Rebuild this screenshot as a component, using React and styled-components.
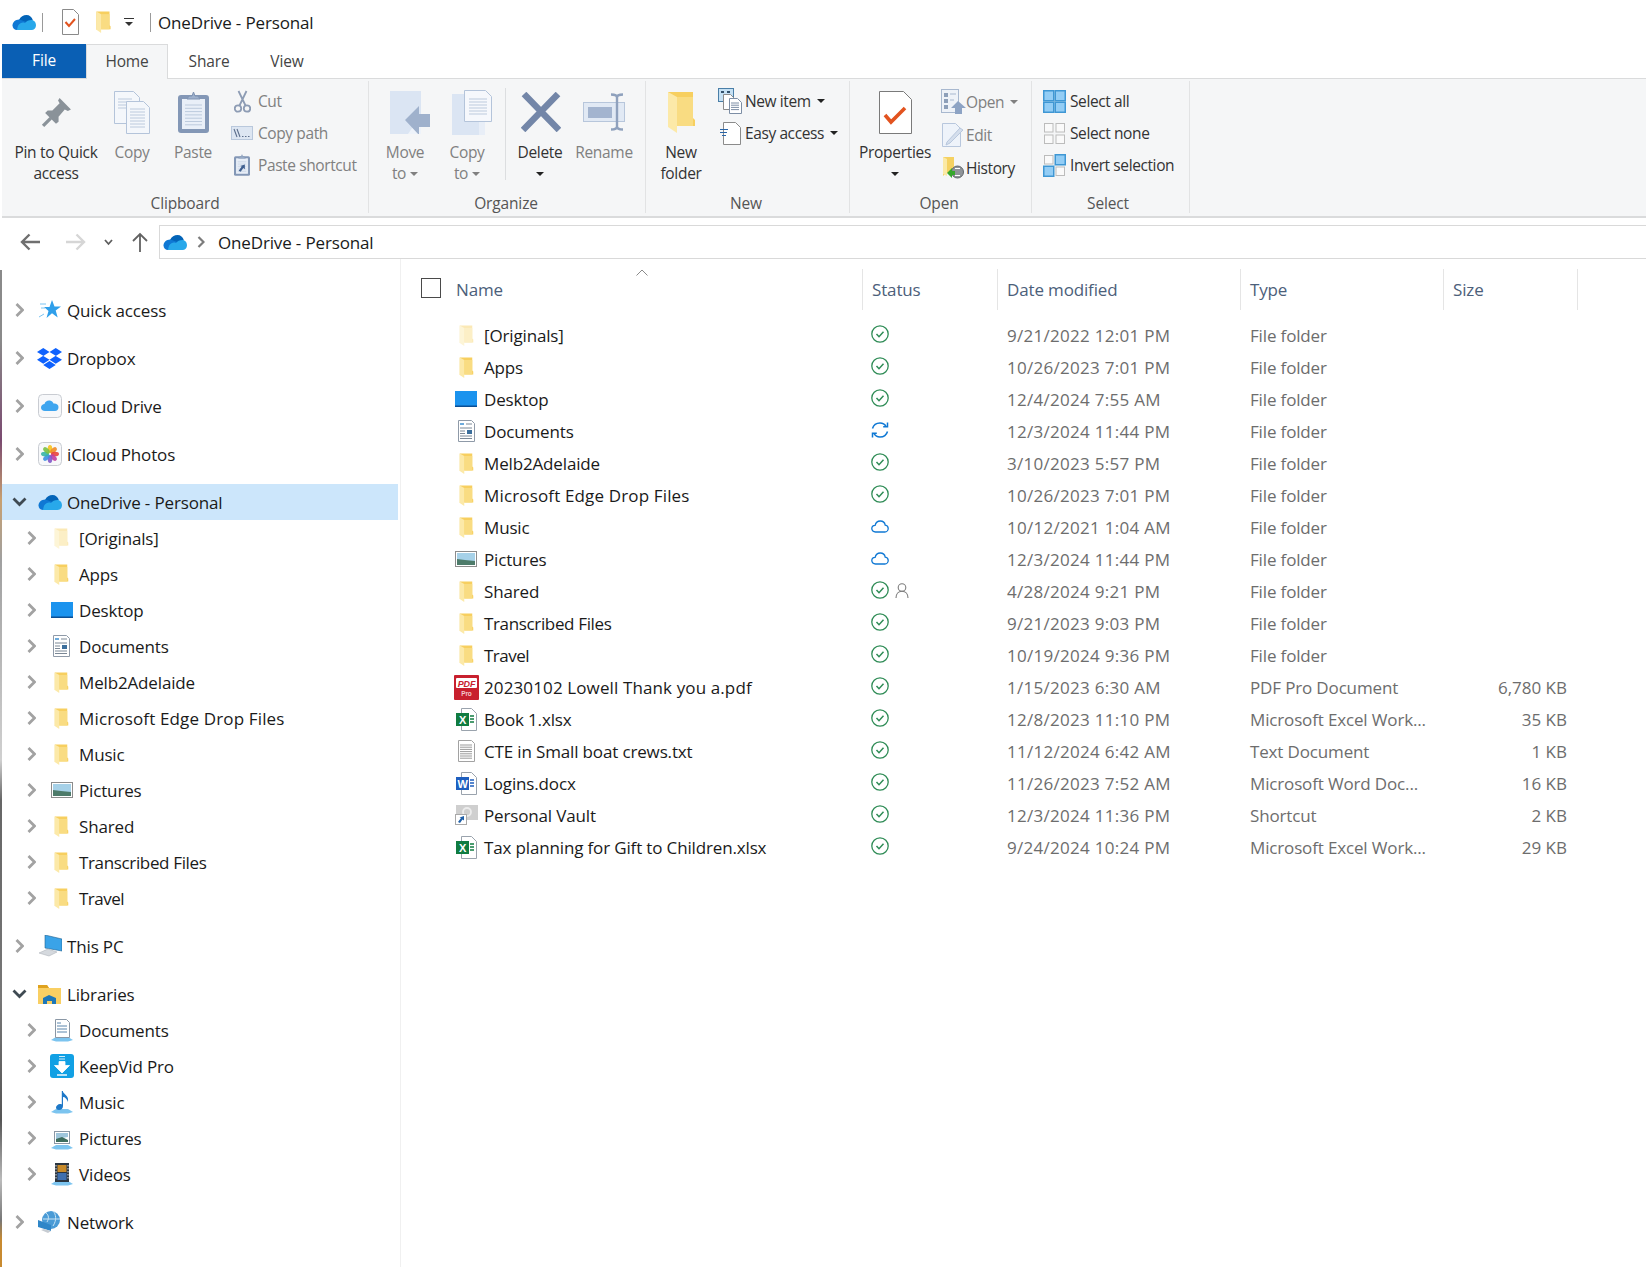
import React from 'react';
import styled, { createGlobalStyle } from 'styled-components';
import { FaDropbox } from 'react-icons/fa';

const GlobalStyle = createGlobalStyle`
  html, body { margin: 0; padding: 0; background: #fff; }
  body { font-family: "Open Sans", "Noto Sans", "Liberation Sans", sans-serif; letter-spacing: -0.15px; }
`;

/* ---------- shared drawings ---------- */

const Cloud = ({ w = 24, h = 15 }) => (
  <svg width={w} height={h} viewBox="0 0 24 15">
    <path d="M7 5C8.5 1.8 11.5 0 14.5 0c3 0 5.5 2 6.3 5L14 11 6 7z" fill="#0364b8" />
    <path d="M7.5 4.5C3.5 4.3.5 7.3.5 10.5.5 13 2.5 15 5 15h9l3-7z" fill="#0f78d4" />
    <path d="M19.5 5c-3 0-5 1.2-6.5 3-1.5-.6-3-.6-4.5.2-2 1-3 3-3.5 6.8h14.5c2.5 0 4.5-2 4.5-4.8S22 5 19.5 5z" fill="#28a8ea" />
  </svg>
);

const Folder = ({ w = 15, h = 21, faded }) => (
  <svg width={w} height={h} viewBox="0 0 27 42" opacity={faded ? 0.45 : 1}>
    <path d="M0 1h25v26l2 2v6H9L0 36z" fill="#f7cf5f" />
    <path d="M9 6h16v29H9z" fill="#f9dc82" />
    <path d="M0 1l9 5v36l-9-6z" fill="#fce9a8" />
  </svg>
);

const DocLines = ({ x, y, w, n, gap = 3, color = '#bccadd' }) => (
  <>
    {Array.from({ length: n }).map((_, i) => (
      <line key={i} x1={x} x2={x + w} y1={y + i * gap} y2={y + i * gap} stroke={color} strokeWidth="1" />
    ))}
  </>
);

const Page = ({ x, y, w, h, fold = 6, fill = '#f4f7fb', stroke = '#b4c4da' }) => (
  <path
    d={`M${x + .5} ${y + .5}h${w - fold}l${fold} ${fold}v${h - fold}h${-w}z`}
    fill={fill}
    stroke={stroke}
  />
);

const Clipboard = ({ w, h, arrow }) => (
  <svg width={w} height={h} viewBox="0 0 31 42">
    <rect y="4" width="31" height="38" rx="3" fill="#8397b6" />
    <rect x="4" y="8" width="23" height="30" fill="#e9eff8" />
    <DocLines x={7} y={14} w={17} n={7} gap={3.3} />
    <path d="M9 8l2-3h3l1.5-4 1.5 4h3l2 3z" fill="#9db0cc" stroke="#7f93b2" />
    {arrow && <path d="M9 32l6-8-3-1 9-3v9l-3-2-5 7z" fill="#3f5f8f" />}
  </svg>
);

const Pin = () => (
  <svg width="31" height="31" viewBox="0 0 30 30">
    <path d="M18 1l11 11-3 1.5-3-1.5-6 7v5l-2.5 2L4 15.5 6.5 13H11l7-7-1.5-2.5z" fill="#8a9299" />
    <path d="M9.5 20.5L2 28" stroke="#8a9299" strokeWidth="3.2" />
  </svg>
);

const CopyDocs = () => (
  <svg width="36" height="43" viewBox="0 0 36 43">
    <Page x={0} y={0} w={25} h={32} />
    <DocLines x={4} y={8} w={14} n={4} />
    <Page x={12} y={10} w={23} h={32} />
    <DocLines x={16} y={18} w={15} n={7} />
  </svg>
);

const Scissors = () => (
  <svg width="17" height="23" viewBox="0 0 17 23" fill="none" stroke="#8d9cb4" strokeWidth="1.8">
    <circle cx="4" cy="18.5" r="3.2" />
    <circle cx="13" cy="18.5" r="3.2" />
    <path d="M5.5 15.5L12.5 1M11.5 15.5L4.5 1" />
  </svg>
);

const CopyPath = () => (
  <svg width="22" height="14" viewBox="0 0 22 14">
    <rect x=".5" y=".5" width="21" height="13" fill="#dde6f2" stroke="#b9c8dc" />
    <path d="M3 3l3 8M6 3l3 8" stroke="#5d6f8c" strokeWidth="1.1" />
    <path d="M11 10.5h1.5M14 10.5h1.5M17 10.5h1.5" stroke="#5d6f8c" strokeWidth="1.2" />
  </svg>
);

const MoveTo = () => (
  <svg width="40" height="43" viewBox="0 0 40 43">
    <path d="M0 0h31v43H0z" fill="#dbe5f3" />
    <path d="M31 24v19H18z" fill="#eef3fa" />
    <path d="M15 29l14-14v8h11v13H29v8z" fill="#9fb1cc" />
  </svg>
);

const CopyTo = () => (
  <svg width="40" height="45" viewBox="0 0 40 45">
    <path d="M0 4h27v41H0z" fill="#dbe5f3" />
    <path d="M27 4h6v41h-6z" fill="#e8eef7" />
    <Page x={12} y={0} w={27} h={31} fill="#f6f8fc" />
    <DocLines x={17} y={9} w={18} n={6} />
  </svg>
);

const DeleteX = () => (
  <svg width="40" height="40" viewBox="0 0 40 40">
    <path d="M3 2l35 36M37 2L2 38" stroke="#7386a8" strokeWidth="6.5" />
  </svg>
);

const RenameIcon = () => (
  <svg width="43" height="38" viewBox="0 0 43 38">
    <rect x=".5" y="9.5" width="41" height="19" fill="#e1e9f4" stroke="#b7c6db" />
    <rect x="5" y="14" width="24" height="11" fill="#a3b4cf" />
    <path d="M28 1.5c4 0 6 1 6 3v29c0 2-2 3-6 3M40 1.5c-4 0-6 1-6 3v29c0 2 2 3 6 3" fill="none" stroke="#8fa1bd" strokeWidth="2.4" />
  </svg>
);

const NewItem = () => (
  <svg width="24" height="26" viewBox="0 0 24 26">
    <rect x=".5" y=".5" width="15" height="13" fill="#c5e0f3" stroke="#4a7fa8" />
    <path d="M3 4h3M9 4h3" stroke="#33516c" strokeWidth="2" />
    <Page x={5} y={6} w={11} h={15} fill="#fff" stroke="#8b8b8b" fold={4} />
    <Page x={11} y={10} w={12} h={15} fill="#fff" stroke="#7d8ea5" fold={4} />
    <DocLines x={13} y={15} w={8} n={4} gap={2.2} color="#7d8ea5" />
  </svg>
);

const EasyAccess = () => (
  <svg width="21" height="23" viewBox="0 0 21 23">
    <Page x={3} y={0} w={17} h={22} fill="#fff" stroke="#8b8b8b" fold={5} />
    <path d="M0 7.5h8M0 10.5h7M2 13.5h4" stroke="#2a66a8" strokeWidth="1.2" />
  </svg>
);

const PropertiesIcon = () => (
  <svg width="33" height="43" viewBox="0 0 33 43">
    <Page x={0} y={0} w={32} h={42} fill="#fff" stroke="#7a7a7a" fold={8} />
    <path d="M6 24l6 7 14-14" fill="none" stroke="#e2531f" strokeWidth="3.6" />
  </svg>
);

const OpenIcon = () => (
  <svg width="25" height="25" viewBox="0 0 25 25">
    <rect x=".5" y=".5" width="17" height="23" fill="#eef2f8" stroke="#a8b8cf" />
    <path d="M3 4h4v4H3zM3 10h4v4H3zM3 16h4v4H3z" fill="#8d9fb9" />
    <path d="M9 5h6M9 11h4" stroke="#a8b8cf" />
    <path d="M17 12l8 7h-4v6h-7v-6h-4z" fill="#8da3c4" />
  </svg>
);

const EditIcon = () => (
  <svg width="22" height="24" viewBox="0 0 22 24">
    <Page x={0} y={0} w={18} h={23} fill="#eef3fa" stroke="#b8c7dd" fold={5} />
    <path d="M5 19L18 5l3 2L8 20l-4 2z" fill="#d4deec" stroke="#b8c7dd" />
  </svg>
);

const HistoryIcon = () => (
  <svg width="21" height="23" viewBox="0 0 21 23">
    <path d="M0 1h11v16H3l-3 3z" fill="#f5d161" />
    <path d="M0 1l4 2v17l-4-2z" fill="#fbe9a5" />
    <circle cx="14.5" cy="16" r="6" fill="#8f9499" stroke="#60656a" />
    <path d="M12 12.5h5M12 19.5h5" stroke="#fff" strokeWidth="1.2" />
    <path d="M4 17l5-5v3h3v4H9v3z" fill="#35a72c" />
  </svg>
);

const Grid4 = ({ on = [] }) => (
  <svg width="23" height="23" viewBox="0 0 23 23">
    {[[0, 0], [11.5, 0], [0, 11.5], [11.5, 11.5]].map(([x, y], i) => (
      on.includes(i)
        ? <rect key={i} x={x + .75} y={y + .75} width="10" height="10" fill="#93cdf5" stroke="#3f97d4" strokeWidth="1.5" />
        : <rect key={i} x={x + 1.5} y={y + 1.5} width="8.5" height="8.5" fill="#fafafa" stroke="#bcbcbc" />
    ))}
  </svg>
);

const StarIcon = () => (
  <svg width="22" height="20" viewBox="0 0 22 20">
    <path d="M13 0l2.5 6.5H22l-5.3 4 2 7-5.7-4.2L7.5 18l2-7-4.5-4h5.5z" fill="#2f9fea" />
    <path d="M1 4h6M2 8h4M0 17l5-3" stroke="#7bc4f2" strokeWidth="1" />
  </svg>
);

const AppTile = ({ children }) => (
  <svg width="24" height="24" viewBox="0 0 24 24">
    <rect x=".5" y=".5" width="23" height="23" rx="4" fill="#f7f8fa" stroke="#c9ccd2" />
    {children}
  </svg>
);

const IcloudDrive = () => (
  <AppTile>
    <path d="M7 17c-2.5 0-4-1.5-4-3.5S5 10 6.5 10c.5-2.500 3-4 5.500-3.500 1.500.3 3 1.500 3.500 3 2.500-.5 5 1 5 3.500S19 17 17 17z" fill="#3ea5ef" />
  </AppTile>
);

const petals = ['#f6c21c', '#f08a24', '#e8413c', '#c33c9c', '#7f58c9', '#3d8fe0', '#35b5a6', '#79c043'];
const IcloudPhotos = () => (
  <AppTile>
    {petals.map((c, i) => (
      <ellipse key={c} cx="12" cy="7" rx="2.3" ry="4" fill={c} opacity="0.9" transform={`rotate(${i * 45} 12 12)`} />
    ))}
  </AppTile>
);

const ThisPc = () => (
  <svg width="24" height="22" viewBox="0 0 24 22">
    <path d="M7 0l17 4v12L7 13z" fill="#3aa3e8" stroke="#24618f" strokeWidth=".6" />
    <path d="M1 18l9-4 9 3-8 4z" fill="#d5d9de" stroke="#aeb4ba" strokeWidth=".6" />
  </svg>
);

const LibrariesIcon = () => (
  <svg width="23" height="19" viewBox="0 0 23 19">
    <path d="M0 0h9l2 3h12v16H0z" fill="#f9cf63" />
    <path d="M0 0h9l2 3H0z" fill="#dfa21e" />
    <path d="M5 19v-6l6-3 7 3v6h-4v-3H9v3z" fill="#1e77b8" />
  </svg>
);

const Shelf = ({ children }) => (
  <svg width="24" height="24" viewBox="0 0 24 24">
    <path d="M1 22l5-3h12l5 3-5 1.5H6z" fill="#7cc4ef" />
    {children}
  </svg>
);

const KeepVid = () => (
  <svg width="24" height="24" viewBox="0 0 24 24">
    <rect width="24" height="24" rx="3" fill="#11a0e4" />
    <path d="M9 2.5h6M9 5h6M9 7.5h6v4h4.500L12 19 4.500 11.500H9z" fill="#fff" stroke="#fff" strokeWidth=".8" />
    <path d="M7 21h10" stroke="#fff" strokeWidth="1.4" />
  </svg>
);

const MusicNote = () => (
  <Shelf>
    <path d="M13 1v15c0 2.500-2 4-4 4s-3-1-3-2.500S8 14 10 14c.8 0 1.300.1 1.800.4V1zM13 2c2 3 6 4 5 10-1-3-3-5-5-5z" fill="#1d78c8" />
  </Shelf>
);

const ShelfPicture = () => (
  <Shelf>
    <rect x="4.5" y="5.5" width="15" height="12" fill="#fff" stroke="#8a97a5" />
    <path d="M6 7h12v4l-6 1-6 2z" fill="#9fc6dc" />
    <path d="M6 13l6-2 6 3v2H6z" fill="#3e6d5e" />
  </Shelf>
);

const ShelfDoc = () => (
  <Shelf>
    <Page x={5} y={1} w={14} h={18} fill="#fff" stroke="#8a97a5" fold={3} />
    <path d="M7 5h4M7 8h10M7 11h10M7 14h10" stroke="#5b86ad" />
  </Shelf>
);

const ShelfVideo = () => (
  <Shelf>
    <rect x="5" y="1" width="14" height="19" fill="#2b3540" />
    <rect x="7.5" y="3" width="9" height="7" fill="#c78a2a" />
    <rect x="7.5" y="11" width="9" height="7" fill="#3f6fae" />
    <path d="M6 3v15M18 3v15" stroke="#d8dde2" strokeWidth="1" strokeDasharray="1.5 1.5" />
  </Shelf>
);

const NetworkIcon = () => (
  <svg width="23" height="23" viewBox="0 0 23 23">
    <circle cx="13" cy="9" r="9" fill="#4a9bd6" />
    <path d="M8 2c3 2 3 6 1 9M15 0c3 3 4 9 0 15M5 8h17" stroke="#c8e4f5" fill="none" />
    <path d="M0 9l13 5v6L0 16z" fill="#2f86c8" />
    <path d="M3 19l7 3 3-2-7-2z" fill="#c7ccd2" />
  </svg>
);

const DesktopIcon = () => (
  <svg width="22" height="16" viewBox="0 0 22 16">
    <rect width="22" height="16" fill="#1b93ee" />
    <rect y="14.5" width="22" height="1.5" fill="#0b4f94" />
  </svg>
);

const DocumentsIcon = () => (
  <svg width="17" height="22" viewBox="0 0 17 22">
    <Page x={0} y={0} w={16} h={21} fill="#fff" stroke="#8f9aa8" fold={3} />
    <path d="M2 4h4" stroke="#3d8fd0" strokeWidth="1.5" />
    <path d="M8 4h6M2 8h12" stroke="#7b8896" />
    <rect x="9" y="10" width="5" height="4" fill="#3c6f9c" />
    <path d="M2 11h5M2 13.5h5M2 16h12M2 18.5h12" stroke="#7b8896" />
  </svg>
);

const PicturesIcon = () => (
  <svg width="22" height="16" viewBox="0 0 22 16">
    <rect x=".5" y=".5" width="21" height="15" fill="#fff" stroke="#8c8c8c" />
    <rect x="2" y="2" width="18" height="12" fill="#a6d1e8" />
    <path d="M2 8l8 1 10 1v4H2z" fill="#4d7b6a" />
  </svg>
);

const PdfIcon = () => (
  <svg width="25" height="25" viewBox="0 0 25 25">
    <rect width="25" height="25" rx="1" fill="#c8202e" />
    <rect x="2" y="3" width="21" height="10" rx="1" fill="#fff" />
    <text x="12.5" y="11.5" fontSize="9" fontWeight="700" fontStyle="italic" textAnchor="middle" fill="#c8202e" fontFamily="Liberation Sans">PDF</text>
    <text x="12.5" y="21" fontSize="6.5" fontWeight="700" textAnchor="middle" fill="#f3c9cc" fontFamily="Liberation Sans">Pro</text>
  </svg>
);

const OfficeDoc = ({ color, letter }) => (
  <svg width="21" height="23" viewBox="0 0 21 23">
    <Page x={5} y={0} w={15} h={22} fill="#fff" stroke="#9aa3ad" fold={5} />
    <path d="M14 8h4M14 11h4M14 14h4" stroke={color} strokeWidth="1.3" />
    <rect y="5" width="13" height="13" fill={color} />
    <text x="6.5" y="15.5" fontSize="11" fontWeight="700" textAnchor="middle" fill="#fff" fontFamily="Liberation Sans">{letter}</text>
  </svg>
);

const TextDoc = () => (
  <svg width="17" height="22" viewBox="0 0 17 22">
    <Page x={0} y={0} w={16} h={21} fill="#fff" stroke="#a2a2a2" fold={3} />
    <DocLines x={2} y={5} w={12} n={7} gap={2.2} color="#9a9a9a" />
  </svg>
);

const ShortcutIcon = () => (
  <svg width="23" height="20" viewBox="0 0 23 20">
    <rect x="1" width="22" height="15" fill="#cfcfcf" />
    <circle cx="12" cy="7" r="4" fill="none" stroke="#ececec" strokeWidth="1.8" />
    <rect x=".5" y="9.5" width="11" height="10" fill="#fff" stroke="#a9a9a9" />
    <path d="M3 17l3-4-1.5-.5L9 11v4.500L7.500 14.500 5 18z" fill="#1f5fa8" />
  </svg>
);

const StatusSynced = () => (
  <svg width="18" height="18" viewBox="0 0 18 18" fill="none" stroke="#2f8c56" strokeWidth="1.3">
    <circle cx="9" cy="9" r="8.2" />
    <path d="M5.5 9l2.5 2.7 4.5-5" strokeWidth="1.5" />
  </svg>
);

const StatusSyncing = () => (
  <svg width="18" height="18" viewBox="0 0 18 18" fill="none" stroke="#0f78d4" strokeWidth="1.5">
    <path d="M1.5 7.5C2.5 4 5.5 2 9 2c2.7 0 4.8 1.2 6 3.3" />
    <path d="M16.5 10.5C15.5 14 12.5 16 9 16c-2.7 0-4.8-1.2-6-3.3" />
    <path d="M16.5 1.5v4.3h-4.3M1.5 16.5v-4.3h4.3" />
  </svg>
);

const StatusCloud = () => (
  <svg width="18" height="13" viewBox="0 0 18 13" fill="none" stroke="#0f78d4" strokeWidth="1.3">
    <path d="M4.5 12C2.3 12 .8 10.5.8 8.6s1.5-3.3 3.3-3.3C4.7 2.6 6.8 1 9.3 1c2.6 0 4.500 1.700 4.900 4.100 1.800.2 3 1.600 3 3.400S15.800 12 13.800 12z" />
  </svg>
);

const StatusShared = () => (
  <svg width="14" height="15" viewBox="0 0 14 15" fill="none" stroke="#7c7c7c" strokeWidth="1.1">
    <circle cx="7" cy="4.5" r="3.8" />
    <path d="M1 15c0-4 2.5-6.7 6-6.7s6 2.7 6 6.7" />
  </svg>
);

const ArrowLeft = ({ color }) => (
  <svg width="20" height="18" viewBox="0 0 20 18" fill="none" stroke={color} strokeWidth="2.4">
    <path d="M20 9H2M9.5 1.5L2 9l7.5 7.5" />
  </svg>
);

const ArrowRight = ({ color }) => (
  <svg width="20" height="18" viewBox="0 0 20 18" fill="none" stroke={color} strokeWidth="2.4">
    <path d="M0 9h18M10.5 1.5L18 9l-7.5 7.5" />
  </svg>
);

const ArrowUp = () => (
  <svg width="16" height="20" viewBox="0 0 16 20" fill="none" stroke="#626262" strokeWidth="1.8">
    <path d="M8 20V2M1 9l7-7 7 7" />
  </svg>
);

const ChevronDownSmall = () => (
  <svg width="9" height="7" viewBox="0 0 9 7" fill="none" stroke="#5e5e5e" strokeWidth="1.8">
    <path d="M1 1l3.5 4L8 1" />
  </svg>
);

const ChevronRightSmall = () => (
  <svg width="8" height="12" viewBox="0 0 8 12" fill="none" stroke="#7c7c7c" strokeWidth="2.2">
    <path d="M1.5 1l5 5-5 5" />
  </svg>
);

const TreeChevron = ({ open }) =>
  open ? (
    <svg width="15" height="10" viewBox="0 0 15 10" fill="none" stroke="#3f4a52" strokeWidth="2.8">
      <path d="M1.5 1.5l6 6 6-6" />
    </svg>
  ) : (
    <svg width="9" height="14" viewBox="0 0 9 14" fill="none" stroke="#a2a2a2" strokeWidth="2.8">
      <path d="M1.5 1l6 6-6 6" />
    </svg>
  );

const DocCheck = () => (
  <svg width="17" height="26" viewBox="0 0 17 26">
    <Page x={0} y={0} w={16} h={25} fill="#fff" stroke="#8a8a8a" fold={5} />
    <path d="M3.5 13l3.5 4 6-7" fill="none" stroke="#e2531f" strokeWidth="2" />
  </svg>
);

/* ---------- data ---------- */

const F = 'File folder';
const rows = [
  { name: '[Originals]', icon: <Folder faded />, status: 'ok', date: '9/21/2022 12:01 PM', type: F },
  { name: 'Apps', icon: <Folder />, status: 'ok', date: '10/26/2023 7:01 PM', type: F },
  { name: 'Desktop', icon: <DesktopIcon />, status: 'ok', date: '12/4/2024 7:55 AM', type: F },
  { name: 'Documents', icon: <DocumentsIcon />, status: 'sync', date: '12/3/2024 11:44 PM', type: F },
  { name: 'Melb2Adelaide', icon: <Folder />, status: 'ok', date: '3/10/2023 5:57 PM', type: F },
  { name: 'Microsoft Edge Drop Files', icon: <Folder />, status: 'ok', date: '10/26/2023 7:01 PM', type: F },
  { name: 'Music', icon: <Folder />, status: 'cloud', date: '10/12/2021 1:04 AM', type: F },
  { name: 'Pictures', icon: <PicturesIcon />, status: 'cloud', date: '12/3/2024 11:44 PM', type: F },
  { name: 'Shared', icon: <Folder />, status: 'shared', date: '4/28/2024 9:21 PM', type: F },
  { name: 'Transcribed Files', icon: <Folder />, status: 'ok', date: '9/21/2023 9:03 PM', type: F },
  { name: 'Travel', icon: <Folder />, status: 'ok', date: '10/19/2024 9:36 PM', type: F },
  { name: '20230102 Lowell Thank you a.pdf', icon: <PdfIcon />, status: 'ok', date: '1/15/2023 6:30 AM', type: 'PDF Pro Document', size: '6,780 KB' },
  { name: 'Book 1.xlsx', icon: <OfficeDoc color="#107c41" letter="X" />, status: 'ok', date: '12/8/2023 11:10 PM', type: 'Microsoft Excel Work...', size: '35 KB' },
  { name: 'CTE in Small boat crews.txt', icon: <TextDoc />, status: 'ok', date: '11/12/2024 6:42 AM', type: 'Text Document', size: '1 KB' },
  { name: 'Logins.docx', icon: <OfficeDoc color="#1f5fbf" letter="W" />, status: 'ok', date: '11/26/2023 7:52 AM', type: 'Microsoft Word Doc...', size: '16 KB' },
  { name: 'Personal Vault', icon: <ShortcutIcon />, status: 'ok', date: '12/3/2024 11:36 PM', type: 'Shortcut', size: '2 KB' },
  { name: 'Tax planning for Gift to Children.xlsx', icon: <OfficeDoc color="#107c41" letter="X" />, status: 'ok', date: '9/24/2024 10:24 PM', type: 'Microsoft Excel Work...', size: '29 KB' },
];

const tracking = {
  'Microsoft Edge Drop Files': 0.15,
  '20230102 Lowell Thank you a.pdf': 0.12,
  'Transcribed Files': -0.35,
  'Travel': -0.5,
};

const oneDriveChildren = [
  ['[Originals]', <Folder key="a" faded />],
  ['Apps', <Folder key="b" />],
  ['Desktop', <DesktopIcon key="c" />],
  ['Documents', <DocumentsIcon key="d" />],
  ['Melb2Adelaide', <Folder key="e" />],
  ['Microsoft Edge Drop Files', <Folder key="f" />],
  ['Music', <Folder key="g" />],
  ['Pictures', <PicturesIcon key="h" />],
  ['Shared', <Folder key="i" />],
  ['Transcribed Files', <Folder key="j" />],
  ['Travel', <Folder key="k" />],
];

const libraryChildren = [
  ['Documents', <ShelfDoc key="a" />],
  ['KeepVid Pro', <KeepVid key="b" />],
  ['Music', <MusicNote key="c" />],
  ['Pictures', <ShelfPicture key="d" />],
  ['Videos', <ShelfVideo key="e" />],
];

const StatusIcons = ({ status }) => {
  if (status === 'sync') return <StatusSyncing />;
  if (status === 'cloud') return <StatusCloud />;
  if (status === 'shared') return <><StatusSynced /><StatusShared /></>;
  return <StatusSynced />;
};

/* ---------- page ---------- */

const App = () => (
  <>
    <GlobalStyle />
    <Window>
      <TitleBar>
        <TitleIcon $w={24} $ml={10}><Cloud /></TitleIcon>
        <TitleSep $ml={6} />
        <TitleIcon $w={17} $ml={19}><DocCheck /></TitleIcon>
        <TitleIcon $w={15} $ml={17}><Folder h={22} /></TitleIcon>
        <QuickCaret />
        <TitleSep $ml={16} />
        <TitleText>OneDrive - Personal</TitleText>
      </TitleBar>

      <TabRow>
        <FileTab>File</FileTab>
        <Tab $active>Home</Tab>
        <Tab>Share</Tab>
        <Tab $w={74}>View</Tab>
      </TabRow>

      <Ribbon>
        <Group $w={367} label="Clipboard" $labelAt={183}>
          <LargeButton $w={92} $ml={8} icon={<Pin />} lines={['Pin to Quick', 'access']} active />
          <LargeButton $w={60} icon={<CopyDocs />} lines={['Copy']} />
          <LargeButton $w={62} icon={<Clipboard w={31} h={42} />} lines={['Paste']} />
          <SmallColumn $ml={5}>
            <SmallItem icon={<Scissors />} text="Cut" $gap={3} />
            <SmallItem icon={<CopyPath />} text="Copy path" $gap={3} />
            <SmallItem icon={<Clipboard w={16} h={22} arrow />} text="Paste shortcut" $gap={3} />
          </SmallColumn>
        </Group>

        <Group $w={277} label="Organize" $labelAt={137}>
          <LargeButton $w={64} $ml={4} $shift={10} icon={<MoveTo />} lines={['Move', <>to <Caret /></>]} />
          <LargeButton $w={60} $shift={10} icon={<CopyTo />} lines={['Copy', <>to <Caret /></>]} />
          <OrganizeSep />
          <LargeButton $w={60} $ml={4} $shift={2} icon={<DeleteX />} lines={['Delete', <Caret key="c" $dark />]} active />
          <LargeButton $w={66} $ml={1} icon={<RenameIcon />} lines={['Rename']} />
        </Group>

        <Group $w={204} label="New" $labelAt={100}>
          <LargeButton $w={60} $ml={5} icon={<Folder w={27} h={42} />} lines={['New', 'folder']} active />
          <SmallColumn $ml={6}>
            <SmallItem icon={<NewItem />} text="New item" active caret $gap={2} />
            <SmallItem icon={<EasyAccess />} text="Easy access" active caret $gap={2} />
          </SmallColumn>
        </Group>

        <Group $w={182} label="Open" $labelAt={89}>
          <LargeButton $w={84} $ml={3} icon={<PropertiesIcon />} lines={['Properties', <Caret key="c" $dark />]} active />
          <SmallColumn $ml={3} $row={33}>
            <SmallItem icon={<OpenIcon />} text="Open" caret />
            <SmallItem icon={<EditIcon />} text="Edit" />
            <SmallItem icon={<HistoryIcon />} text="History" active />
          </SmallColumn>
        </Group>

        <Group $w={158} label="Select" $labelAt={76}>
          <SmallColumn $ml={9}>
            <SmallItem icon={<Grid4 on={[0, 1, 2, 3]} />} text="Select all" active $gap={3} />
            <SmallItem icon={<Grid4 />} text="Select none" active $gap={3} />
            <SmallItem icon={<Grid4 on={[1, 2]} />} text="Invert selection" active $gap={3} />
          </SmallColumn>
        </Group>
      </Ribbon>

      <AddressRow>
        <NavButton $w={62} $pl={18}><ArrowLeft color="#6f6f6f" /></NavButton>
        <NavButton $w={40} $pl={2}><ArrowRight color="#d6d6d6" /></NavButton>
        <NavButton $w={14}><ChevronDownSmall /></NavButton>
        <NavButton $w={41} $pl={14}><ArrowUp /></NavButton>
        <AddressBox>
          <Cloud />
          <ChevronRightSmall />
          <AddressText>OneDrive - Personal</AddressText>
        </AddressBox>
      </AddressRow>

      <Content>
        <Sidebar>
          <TreeRow icon={<StarIcon />} label="Quick access" />
          <TreeRow icon={<FaDropbox size={25} color="#0f62fe" />} label="Dropbox" />
          <TreeRow icon={<IcloudDrive />} label="iCloud Drive" />
          <TreeRow icon={<IcloudPhotos />} label="iCloud Photos" />
          <TreeSection>
            <TreeRow icon={<Cloud />} label="OneDrive - Personal" open selected />
            {oneDriveChildren.map(([label, icon]) => (
              <TreeRow key={label} child icon={icon} label={label} />
            ))}
          </TreeSection>
          <TreeRow icon={<ThisPc />} label="This PC" />
          <TreeSection>
            <TreeRow icon={<LibrariesIcon />} label="Libraries" open />
            {libraryChildren.map(([label, icon]) => (
              <TreeRow key={label} child icon={icon} label={label} />
            ))}
          </TreeSection>
          <TreeRow icon={<NetworkIcon />} label="Network" />
        </Sidebar>

        <FileList>
          <HeaderRow>
            <NameHeader>
              <CheckBox />
              <HeaderText>Name</HeaderText>
              <SortArrow viewBox="0 0 12 7" fill="none" stroke="#8a8a8a" strokeWidth="1">
                <path d="M.5 6.5L6 1l5.5 5.5" />
              </SortArrow>
            </NameHeader>
            <HeaderCell $pl={9}><HeaderText>Status</HeaderText></HeaderCell>
            <HeaderCell $pl={9}><HeaderText>Date modified</HeaderText></HeaderCell>
            <HeaderCell $pl={9}><HeaderText>Type</HeaderText></HeaderCell>
            <HeaderCell $pl={9} $end><HeaderText>Size</HeaderText></HeaderCell>
          </HeaderRow>
          {rows.map(row => (
            <FileRow key={row.name}>
              <NameCell>
                <FileIcon>{row.icon}</FileIcon>
                <FileName $track={tracking[row.name]}>{row.name}</FileName>
              </NameCell>
              <StatusCell><StatusIcons status={row.status} /></StatusCell>
              <DateCell>{row.date}</DateCell>
              <InfoCell $pl={10}>{row.type}</InfoCell>
              <SizeCell>{row.size}</SizeCell>
            </FileRow>
          ))}
        </FileList>
      </Content>
    </Window>
  </>
);

export default App;

/* ---------- ribbon parts ---------- */

const Group = ({ $w, label, $labelAt, children }) => (
  <GroupBox $w={$w}>
    <GroupBody>{children}</GroupBody>
    <GroupLabel $at={$labelAt}>{label}</GroupLabel>
  </GroupBox>
);

const LargeButton = ({ $w, $ml, $shift, icon, lines, active }) => (
  <LargeBox $w={$w} $ml={$ml} $active={active}>
    <LargeIcon $shift={$shift}>{icon}</LargeIcon>
    {lines.map((line, i) => <LargeLine key={i}>{line}</LargeLine>)}
  </LargeBox>
);

const SmallItem = ({ icon, text, active, caret, $gap }) => (
  <SmallRow $active={active}>
    <SmallIcon>{icon}</SmallIcon>
    <SmallText $gap={$gap}>{text}</SmallText>
    {caret && <Caret $dark={active} $ml={6} />}
  </SmallRow>
);

const TreeRow = ({ icon, label, child, open, selected }) => (
  <TreeItem $child={child} $selected={selected}>
    <TreeArrow><TreeChevron open={open} /></TreeArrow>
    <TreeIcon>{icon}</TreeIcon>
    <TreeLabel $track={tracking[label]}>{label}</TreeLabel>
  </TreeItem>
);

/* ---------- styles ---------- */

const Window = styled.div`
  width: 1646px;
  height: 1267px;
  overflow: hidden;
  box-sizing: border-box;
  padding-left: 2px;
  background: linear-gradient(#fff 270px, #8a8a8a 270px, #8a8a8a 340px, #7a4a70 440px, #c8a070 500px, #a0a0a0 560px, #d0d0d0 760px, #666 800px, #777 1000px, #555 1120px, #bbb 1180px, #777 1220px, #c88a30 1240px);
`;

const TitleBar = styled.div`
  height: 44px;
  display: flex;
  align-items: center;
  background: #fff;
`;

const TitleIcon = styled.div`
  width: ${p => p.$w}px;
  margin-left: ${p => p.$ml}px;
  display: flex;
  align-items: center;
`;

const TitleSep = styled.div`
  width: 1px;
  height: 19px;
  margin-left: ${p => p.$ml}px;
  background: #9a9a9a;
`;

const QuickCaret = styled.div`
  width: 10px;
  margin-left: 13px;
  height: 8px;
  border-top: 1.5px solid #333;
  box-sizing: border-box;
  position: relative;
  &::after {
    content: '';
    position: absolute;
    left: 1px;
    top: 3px;
    border-left: 4px solid transparent;
    border-right: 4px solid transparent;
    border-top: 4px solid #333;
  }
`;

const TitleText = styled.div`
  margin-left: 7px;
  font-size: 17px;
  color: #1a1a1a;
`;

const TabRow = styled.div`
  height: 34px;
  display: flex;
  background: #fff;
  border-bottom: 1px solid #dadbdc;
`;

const Tab = styled.div`
  width: ${p => p.$w || 82}px;
  box-sizing: border-box;
  display: flex;
  align-items: center;
  justify-content: center;
  padding-bottom: 2px;
  font-size: 15.5px;
  color: #444;
  background: ${p => (p.$active ? '#f5f6f7' : '#fff')};
  border: 1px solid ${p => (p.$active ? '#dadbdc' : 'transparent')};
  border-bottom: none;
  height: ${p => (p.$active ? '35px' : '34px')};
`;

const FileTab = styled(Tab)`
  width: 84px;
  background: #0a5fb4;
  color: #fff;
  border: none;
  height: 34px;
`;

const Ribbon = styled.div`
  height: 137px;
  display: flex;
  background: #f5f6f7;
  border-bottom: 2px solid #dadbdc;
`;

const GroupBox = styled.div`
  width: ${p => p.$w}px;
  box-sizing: border-box;
  display: flex;
  flex-direction: column;
  margin: 2px 0 3px;
  border-right: 1px solid #e2e3e4;
`;

const GroupBody = styled.div`
  height: 108px;
  box-sizing: border-box;
  padding-top: 4px;
  display: flex;
`;

const GroupLabel = styled.div`
  width: ${p => p.$at * 2}px;
  height: 24px;
  box-sizing: border-box;
  padding-top: 3px;
  display: flex;
  align-items: center;
  justify-content: center;
  font-size: 15.5px;
  color: #555;
`;

const LargeBox = styled.div`
  width: ${p => p.$w}px;
  margin-left: ${p => p.$ml || 0}px;
  flex: none;
  display: flex;
  flex-direction: column;
  align-items: center;
  font-size: 15.5px;
  letter-spacing: -0.3px;
  color: ${p => (p.$active ? '#333' : '#808080')};
`;

const LargeIcon = styled.div`
  height: 54px;
  margin-bottom: 3px;
  margin-left: ${p => p.$shift || 0}px;
  display: flex;
  align-items: center;
  justify-content: center;
`;

const LargeLine = styled.div`
  height: 21px;
  line-height: 21px;
  white-space: nowrap;
  display: flex;
  align-items: center;
  gap: 4px;
`;

const Caret = styled.span`
  display: inline-block;
  width: 0;
  height: 0;
  margin-left: ${p => p.$ml || 0}px;
  border-left: 4px solid transparent;
  border-right: 4px solid transparent;
  border-top: 4px solid ${p => (p.$dark ? '#222' : '#808080')};
`;

const SmallColumn = styled.div`
  margin-left: ${p => p.$ml || 0}px;
  display: grid;
  grid-auto-rows: ${p => p.$row || 32}px;
`;

const SmallRow = styled.div`
  display: flex;
  align-items: center;
  font-size: 15.5px;
  letter-spacing: -0.4px;
  color: ${p => (p.$active ? '#333' : '#808080')};
`;

const SmallIcon = styled.div`
  width: 26px;
  display: flex;
  align-items: center;
  justify-content: center;
`;

const SmallText = styled.span`
  margin-left: ${p => p.$gap ?? 0}px;
  white-space: nowrap;
`;

const OrganizeSep = styled.div`
  width: 1px;
  height: 92px;
  margin: 3px 0 0 8px;
  background: #dcdee0;
`;

const AddressRow = styled.div`
  height: 34px;
  margin-top: 7px;
  display: flex;
  background: #fff;
`;

const NavButton = styled.div`
  width: ${p => p.$w}px;
  padding-left: ${p => p.$pl || 0}px;
  box-sizing: border-box;
  display: flex;
  align-items: center;
`;

const AddressBox = styled.div`
  flex: 1;
  display: flex;
  align-items: center;
  gap: 10px;
  padding-left: 3px;
  border: 1px solid #d9d9d9;
  border-right: none;
`;

const AddressText = styled.span`
  margin-left: 3px;
  font-size: 17px;
  color: #1a1a1a;
`;

const Content = styled.div`
  display: flex;
  background: #fff;
  height: 1009px;
`;

const Sidebar = styled.nav`
  width: 399px;
  box-sizing: border-box;
  padding-top: 33px;
  border-right: 1px solid #f0f0f0;
  display: flex;
  flex-direction: column;
  gap: 12px;
`;

const TreeSection = styled.div`
  display: flex;
  flex-direction: column;
`;

const TreeItem = styled.div`
  height: 36px;
  width: 396px;
  display: flex;
  align-items: center;
  padding-left: ${p => (p.$child ? 12 : 0)}px;
  box-sizing: border-box;
  background: ${p => (p.$selected ? '#cce6fb' : 'transparent')};
`;

const TreeArrow = styled.div`
  width: 34px;
  box-sizing: border-box;
  display: flex;
  justify-content: center;
  flex: none;
`;

const TreeIcon = styled.div`
  width: 27px;
  flex: none;
  display: flex;
  justify-content: center;
  align-items: center;
`;

const TreeLabel = styled.span`
  margin-left: 4px;
  font-size: 17px;
  color: #1a1a1a;
  white-space: nowrap;
  letter-spacing: ${p => p.$track ?? -0.15}px;
`;

const cols = '461px 135px 243px 203px 135px';

const FileList = styled.main`
  flex: 1;
  padding-top: 10px;
`;

const HeaderRow = styled.div`
  display: grid;
  grid-template-columns: ${cols};
  height: 41px;
  margin-bottom: 9px;
`;

const HeaderCell = styled.div`
  display: flex;
  align-items: center;
  padding-left: ${p => p.$pl}px;
  border-left: 1px solid #e5e5e5;
  border-right: ${p => (p.$end ? '1px solid #e5e5e5' : 'none')};
`;

const NameHeader = styled.div`
  position: relative;
  display: flex;
  align-items: center;
  padding-left: 20px;
  gap: 15px;
`;

const HeaderText = styled.span`
  font-size: 17px;
  color: #4c607a;
`;

const CheckBox = styled.div`
  width: 20px;
  height: 20px;
  margin-bottom: 4px;
  box-sizing: border-box;
  border: 1px solid #4a4a4a;
`;

const SortArrow = styled.svg`
  position: absolute;
  left: 235px;
  top: 0;
  width: 12px;
  height: 7px;
`;

const FileRow = styled.div`
  display: grid;
  grid-template-columns: ${cols};
  height: 32px;
  align-items: center;
`;

const NameCell = styled.div`
  display: flex;
  align-items: center;
  padding-left: 52px;
`;

const FileIcon = styled.div`
  width: 26px;
  display: flex;
  justify-content: center;
  align-items: center;
  flex: none;
`;

const FileName = styled.span`
  margin-left: 5px;
  font-size: 17px;
  color: #1a1a1a;
  white-space: nowrap;
  letter-spacing: ${p => p.$track ?? -0.15}px;
`;

const StatusCell = styled.div`
  display: flex;
  align-items: center;
  gap: 6px;
  padding-left: 9px;
  margin-bottom: 2px;
`;

const InfoCell = styled.div`
  padding-left: ${p => p.$pl}px;
  font-size: 17px;
  color: #6d6d6d;
  white-space: nowrap;
`;

const DateCell = styled(InfoCell)`
  padding-left: 10px;
  letter-spacing: 0.28px;
`;

const SizeCell = styled(InfoCell)`
  padding: 0 11px 0 0;
  letter-spacing: 0;
  text-align: right;
`;
